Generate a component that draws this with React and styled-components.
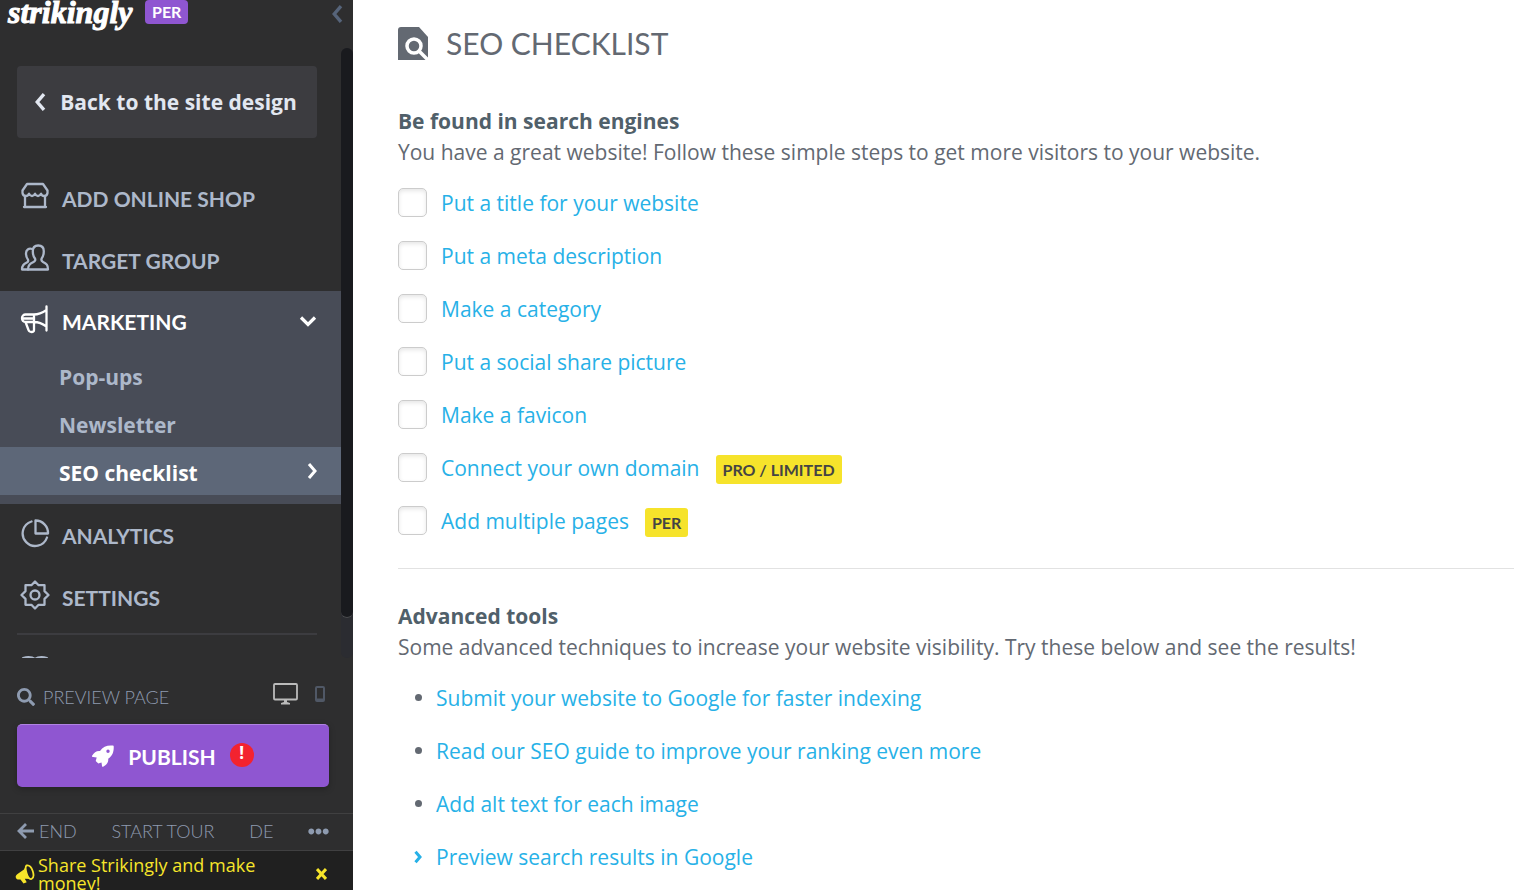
import React from 'react';
import styled, { createGlobalStyle } from 'styled-components';
import { FaSearch, FaEllipsisH } from 'react-icons/fa';

const GlobalStyle = createGlobalStyle`
  * {
    box-sizing: border-box;
  }

  body {
    margin: 0;
    background: #fff;
    font-family: "Open Sans", sans-serif;
    color: #636972;
  }

  button {
    border: 0;
    background: none;
    padding: 0;
    font: inherit;
    color: inherit;
    cursor: pointer;
  }

  a {
    text-decoration: none;
  }

  svg {
    flex: none;
  }

  ul, h1, h2, p {
    margin: 0;
    padding: 0;
  }
`

const Page = styled.div`
  display: flex;
  height: 100vh;
  overflow: hidden;
`

const Sidebar = styled.aside`
  display: flex;
  flex-direction: column;
  flex: none;
  width: 353px;
  background: #2e2e2f;
  color: #adb8ca;
`

const TopBar = styled.header`
  display: flex;
  align-items: flex-start;
  flex: none;
  height: 48px;
  padding: 0 10px 0 8px;
`

const Logo = styled.a`
  width: 126px;
  margin-right: 11px;
  font-family: "Liberation Serif", serif;
  font-size: 32px;
  font-weight: 700;
  font-style: italic;
  line-height: 24px;
  color: #fff;
  -webkit-text-stroke: 1px #fff;
`

const PlanBadge = styled.span`
  padding: 0 7px;
  border-radius: 4px;
  background: #8f56d1;
  font-family: Lato, sans-serif;
  font-size: 16px;
  font-weight: 700;
  line-height: 24px;
  color: #fff;
`

const Collapse = styled.button`
  display: flex;
  margin: 5px 0 0 auto;
  color: #56647a;
`

const MenuArea = styled.div`
  display: flex;
  flex: 1;
  min-height: 0;
`

const Menu = styled.nav`
  flex: 1;
  padding-top: 18px;
  overflow: hidden;
`

const Track = styled.div`
  width: 12px;
  border-radius: 6px;
  background: #2b2c31;
`

const Thumb = styled.div`
  height: 93.4%;
  border-radius: 6px;
  border-bottom: 1px solid #4c4d50;
  background: #191a1e;
`

const BackButton = styled.button`
  display: flex;
  align-items: center;
  gap: 14px;
  width: calc(100% - 41px);
  height: 72px;
  margin: 0 24px 29px 17px;
  padding: 0 18px;
  border-radius: 4px;
  background: #3c3c40;
  font-size: 21px;
  font-weight: 700;
  color: #e2e7f0;
  white-space: nowrap;
`

const NavRow = styled.button`
  display: flex;
  align-items: center;
  width: 100%;
  height: ${({ $open }) => ($open ? 60 : 62)}px;
  padding: 0 24px 0 20px;
  font-family: Lato, sans-serif;
  font-size: 21px;
  font-weight: 700;
  color: ${({ $open }) => ($open ? '#fff' : '#adb8ca')};
`

const NavIcon = styled.span`
  display: flex;
  margin: 0 12px 4px 0;
`

const NavText = styled.span`
  flex: 1;
  text-align: left;
`

const NavGroup = styled.div`
  padding-bottom: 9px;
  background: #484c57;
`

const SubItem = styled.a`
  display: flex;
  align-items: center;
  justify-content: space-between;
  height: 48px;
  padding: 4px 24px 0 59px;
  background: ${({ $active }) => ($active ? '#5d6778' : 'transparent')};
  font-size: 21px;
  font-weight: 700;
  color: ${({ $active }) => ($active ? '#fff' : '#adb8ca')};

  svg {
    margin-bottom: 4px;
  }
`

const MenuRule = styled.hr`
  margin: 5px 24px 5px 17px;
  border: 0;
  border-top: 2px solid #3c3c40;
`

const PreviewRow = styled.div`
  display: flex;
  align-items: center;
  flex: none;
  height: 66px;
  padding: 12px 28px 0 17px;
  font-family: Lato, sans-serif;
  font-size: 18px;
  font-weight: 300;
  color: #8e9bb0;
`

const PreviewButton = styled.button`
  display: flex;
  align-items: center;
  gap: 8px;
  margin-right: auto;
`

const DeviceButton = styled.button`
  display: flex;
  margin-left: 17px;
  padding-bottom: 6px;
`

const PublishButton = styled.button`
  display: flex;
  align-items: center;
  justify-content: center;
  flex: none;
  height: 63px;
  margin: 0 24px 26px 17px;
  border-top: 1px solid #b083e2;
  border-radius: 5px;
  background: #8f56d1;
  box-shadow: 0 2px 6px rgba(0, 0, 0, .25);
  font-family: Lato, sans-serif;
  font-size: 21px;
  font-weight: 700;
  color: #fff;
`

const PublishLabel = styled.span`
  margin: 0 14px;
`

const Alert = styled.span`
  width: 24px;
  height: 24px;
  margin-bottom: 2px;
  border-radius: 50%;
  background: #f3232f;
  font-family: "Noto Sans", sans-serif;
  font-size: 17px;
  line-height: 20px;
  text-align: center;
`

const BottomBar = styled.div`
  display: flex;
  align-items: center;
  justify-content: space-between;
  flex: none;
  height: 38px;
  padding: 0 24px 2px 17px;
  border-top: 1px solid #404041;
  border-bottom: 1px solid #404041;
  font-family: Lato, sans-serif;
  font-size: 18px;
  font-weight: 300;
  color: #8e9bb0;
`

const BarButton = styled.button`
  display: flex;
  align-items: center;
  gap: 5px;
`

const ShareBar = styled.div`
  display: flex;
  align-items: center;
  flex: none;
  height: 39px;
  padding: 7px 26px 0 15px;
  background: #202020;
  color: #f7e52a;
`

const ShareLink = styled.a`
  flex: 1;
  margin: 0 50px 0 3px;
  font-size: 18px;
  line-height: 18px;
  color: inherit;
`

const Main = styled.main`
  flex: 1;
  min-width: 0;
  padding: 22px 0 0 45px;
  overflow: hidden;
`

const Heading = styled.h1`
  display: flex;
  align-items: center;
  gap: 18px;
  height: 42px;
  margin-bottom: 42px;
  font-family: Lato, sans-serif;
  font-size: 30px;
  font-weight: 400;
  line-height: 40px;
`

const SectionTitle = styled.h2`
  font-size: 21px;
  font-weight: 700;
  line-height: 31px;
  color: #50606a;
`

const Lead = styled.p`
  font-size: 21px;
  line-height: 31px;
`

const List = styled.ul`
  padding-top: 8px;
  list-style: none;
`

const Item = styled.li`
  display: flex;
  align-items: center;
  height: 53px;
`

const Check = styled.input`
  appearance: none;
  width: 29px;
  height: 29px;
  margin: 0 14px 0 0;
  border: 1px solid #ccc;
  border-radius: 5px;
  background: #fff;
  box-shadow: inset 0 2px 4px rgba(0, 0, 0, .1);
`

const TextLink = styled.a`
  font-size: 21px;
  color: #27b1e7;
`

const Tag = styled.span`
  margin: 4px 0 0 16px;
  padding: 0 7px;
  border-radius: 3px;
  background: #f6e32b;
  font-family: Lato, sans-serif;
  font-size: 16px;
  font-weight: 700;
  line-height: 29px;
  color: #444;
`

const Rule = styled.hr`
  margin: 21px 0 32px;
  border: 0;
  border-top: 1px solid #e2e2e2;
`

const Marker = styled.span`
  display: flex;
  justify-content: center;
  width: 12px;
  margin: 0 12px 0 14px;
  color: #27b1e7;
`

const Dot = styled.span`
  width: 7px;
  height: 7px;
  border-radius: 50%;
  background: #636972;
`

const arrows = {
  left: 'M8 1L2 8l6 7',
  right: 'M2 1l6 7-6 7',
}

const Chevron = ({ to, height = 16, weight = 3 }) => (
  <svg width={height * 0.625} height={height} viewBox="0 0 10 16" fill="none" stroke="currentColor"
    strokeWidth={weight} overflow="visible" aria-hidden="true">
    <path d={arrows[to]} />
  </svg>
)

const ChevronDown = () => (
  <svg width="18" height="18" viewBox="0 0 18 18" fill="none" stroke="currentColor" strokeWidth="3.200" aria-hidden="true">
    <path d="M2 5.500l7 7 7-7" />
  </svg>
)

const Line = ({ children }) => (
  <svg width="30" height="30" viewBox="0 0 30 30" fill="none" stroke="currentColor"
    strokeWidth="2.300" strokeLinejoin="round" strokeLinecap="round" aria-hidden="true">
    {children}
  </svg>
)

const ShopIcon = () => (
  <Line>
    <path d="M7 3h16l4.500 6.500v2.500c-.3 2-1.700 3-3.300 3s-2.600-.8-3.200-2.300c-.8 1.500-1.800 2.300-3 2.300s-2.300-.8-3-2.300c-.7 1.500-1.800 2.300-3 2.300s-2.200-.8-3-2.300C8.400 14.200 7.400 15 5.800 15s-3-1-3.300-3V9.500z" />
    <path d="M5 15.500V26M25 15.500V26M4 26h22" />
  </Line>
)

const GroupIcon = () => (
  <Line>
    <path d="M18.200 2.500c-3.400 0-5.400 2.200-5.400 5.700 0 3 .7 5.300 2 7 1 1.600.4 2.800-1.300 3.700C10 20.700 8 22 8 26.500h20c0-4.500-1.500-5.800-5-7.600-1.700-.9-2-2.100-1.200-3.700 1.200-1.700 2-4 2-7 0-3.500-2.200-5.700-5.600-5.700z" />
    <path d="M12.200 6C8.600 5 6 6.800 6 10.200c0 2.700.6 4.600 1.800 6.200.8 1.300.4 2.400-1 3.200C3.500 21.500 2 22.500 2 26.500h6" />
  </Line>
)

const MegaphoneIcon = () => (
  <Line>
    <path d="M26.500 2.500v24M26.500 6C22 9 19 10.500 14 10.500H5.500A3.500 3.500 0 0 0 2 14c0 2.500 1.500 4 4 4h8c5 0 8 1.200 12.500 4.500M14 10.500V26c0 1-1 2-2.500 2S9 27.500 8.500 26L5.500 18M2.500 14.500H14" />
  </Line>
)

const PieIcon = () => (
  <Line>
    <path d="M11.500 3.500A12.500 12.500 0 1 0 27 19.500" />
    <path d="M15.500 2.500a12.500 12.500 0 0 1 12.500 13H15.500z" />
  </Line>
)

const GearIcon = () => (
  <Line>
    <path d="M15 1.500l3.600 3.700h5.900v5.900l4 3.900-4 3.900v5.900h-5.900L15 28.500l-3.600-3.700H5.500v-5.900l-4-3.900 4-3.900V5.200h5.900z" />
    <circle cx="15" cy="15" r="4.500" />
  </Line>
)

const BookIcon = () => (
  <Line>
    <path d="M15 5c-3-2-8-2-12-1v20c4-1 9-1 12 1 3-2 8-2 12-1V4c-4-1-9-1-12 1zv20" />
  </Line>
)

const RocketIcon = () => (
  <svg width="22" height="22" viewBox="0 0 22 22" fill="currentColor" aria-hidden="true">
    <path fillRule="evenodd" d="M21 .6C15.500 0 11 1.500 8 6 4.500 5.600 2 7.500.2 10.500c-.4.900 0 1.500.9 1.600l3.600.5-1 3.300 2.600 2.600 3.200-1 .5 3.500c.1.900.8 1.100 1.500.6 3.400-2 5.100-4.500 4.700-7.900C20.500 11 22 6.500 21.700 1.300 21.600.8 21.400.6 21 .6zM16 4.500a1.700 1.700 0 1 1 0 3.400 1.700 1.700 0 0 1 0-3.400z" />
  </svg>
)

const BackArrow = () => (
  <svg width="17" height="16" viewBox="0 0 17 16" fill="none" stroke="currentColor" strokeWidth="2.800" aria-hidden="true">
    <path d="M9 1L2 8l7 7M2 8h15" />
  </svg>
)

const HornIcon = () => (
  <svg width="20" height="21" viewBox="0 0 20 21" aria-hidden="true">
    <path d="M10.500 2.500L9 5.500 2.500 10C.8 11.200.3 12.500 1 14c.6 1.300 1.800 1.700 3.500 1.500l1 .1 3 3.900 3.200-1.300-1.900-3.400 6.700.2z" fill="currentColor" />
    <path d="M11.500 1.500c2.500-.5 5 2 6.200 5.500s.8 7-1.200 8c-2 .5-4-2.500-5-6s-1.200-6.500 0-7.500z" fill="#202020" stroke="currentColor" strokeWidth="1.800" />
  </svg>
)

const CloseIcon = () => (
  <svg width="11" height="12" viewBox="0 0 11 12" fill="none" stroke="currentColor" strokeWidth="3" aria-hidden="true">
    <path d="M1 1l9 10M10 1L1 11" />
  </svg>
)

const DesktopIcon = () => (
  <svg width="25" height="22" viewBox="0 0 25 22" fill="none" stroke="#bbb" strokeWidth="1.800" aria-hidden="true">
    <rect x="1" y="1" width="23" height="15.500" rx="1" />
    <path d="M11 17h3v2l3 1v1.500H8V20l3-1z" fill="#bbb" stroke="none" />
  </svg>
)

const PhoneIcon = () => (
  <svg width="10" height="16" viewBox="0 0 10 16" fill="none" stroke="#505866" aria-hidden="true">
    <rect x="1" y="1" width="8" height="14" rx="1" strokeWidth="2" />
    <path d="M1 13.500h8" strokeWidth="2" />
  </svg>
)

const SeoIcon = () => (
  <svg width="30" height="33" viewBox="0 0 30 33" aria-hidden="true">
    <path d="M3 0h18l9 10v23H0V3a3 3 0 0 1 3-3z" fill="#636972" />
    <circle cx="16" cy="19" r="7" fill="none" stroke="#fff" strokeWidth="3.500" />
    <path d="M21 24l9 9" stroke="#fff" strokeWidth="3.500" />
  </svg>
)

const checks = [
  { label: 'Put a title for your website' },
  { label: 'Put a meta description' },
  { label: 'Make a category' },
  { label: 'Put a social share picture' },
  { label: 'Make a favicon' },
  { label: 'Connect your own domain', tag: 'PRO / LIMITED' },
  { label: 'Add multiple pages', tag: 'PER' },
]

const tools = [
  'Submit your website to Google for faster indexing',
  'Read our SEO guide to improve your ranking even more',
  'Add alt text for each image',
]

const CheckItem = ({ id, label, tag }) => (
  <Item>
    <Check type="checkbox" id={id} aria-labelledby={`${id}-label`} />
    <TextLink href="#" id={`${id}-label`}>{label}</TextLink>
    {tag && <Tag>{tag}</Tag>}
  </Item>
)

const NavItem = ({ icon, label, open }) => (
  <NavRow $open={open}>
    <NavIcon>{icon}</NavIcon>
    <NavText>{label}</NavText>
    {open && <ChevronDown />}
  </NavRow>
)

const App = () => {
  return (
    <>
      <GlobalStyle />
      <Page>
        <Sidebar>
          <TopBar>
            <Logo href="#">strikingly</Logo>
            <PlanBadge>PER</PlanBadge>
            <Collapse aria-label="Collapse"><Chevron to="left" height={18} weight={3} /></Collapse>
          </TopBar>

          <MenuArea>
            <Menu>
              <BackButton><Chevron to="left" height={18} />Back to the site design</BackButton>
              <NavItem icon={<ShopIcon />} label="ADD ONLINE SHOP" />
              <NavItem icon={<GroupIcon />} label="TARGET GROUP" />
              <NavGroup>
                <NavItem icon={<MegaphoneIcon />} label="MARKETING" open />
                <SubItem href="#">Pop-ups</SubItem>
                <SubItem href="#">Newsletter</SubItem>
                <SubItem href="#" $active>SEO checklist<Chevron to="right" /></SubItem>
              </NavGroup>
              <NavItem icon={<PieIcon />} label="ANALYTICS" />
              <NavItem icon={<GearIcon />} label="SETTINGS" />
              <MenuRule />
              <NavItem icon={<BookIcon />} />
            </Menu>
            <Track><Thumb /></Track>
          </MenuArea>

          <PreviewRow>
            <PreviewButton><FaSearch size={18} />PREVIEW PAGE</PreviewButton>
            <DeviceButton aria-label="Desktop"><DesktopIcon /></DeviceButton>
            <DeviceButton aria-label="Mobile"><PhoneIcon /></DeviceButton>
          </PreviewRow>
          <PublishButton>
            <RocketIcon />
            <PublishLabel>PUBLISH</PublishLabel>
            <Alert>!</Alert>
          </PublishButton>

          <BottomBar>
            <BarButton><BackArrow />END</BarButton>
            <BarButton>START TOUR</BarButton>
            <BarButton>DE</BarButton>
            <BarButton aria-label="More"><FaEllipsisH size={21} /></BarButton>
          </BottomBar>
          <ShareBar>
            <HornIcon />
            <ShareLink href="#">Share Strikingly and make money!</ShareLink>
            <button aria-label="Close"><CloseIcon /></button>
          </ShareBar>
        </Sidebar>

        <Main>
          <Heading><SeoIcon />SEO CHECKLIST</Heading>
          <SectionTitle>Be found in search engines</SectionTitle>
          <Lead>You have a great website! Follow these simple steps to get more visitors to your website.</Lead>
          <List>
            {checks.map((c, i) => <CheckItem key={c.label} id={`check-${i}`} {...c} />)}
          </List>
          <Rule />
          <SectionTitle>Advanced tools</SectionTitle>
          <Lead>Some advanced techniques to increase your website visibility. Try these below and see the results!</Lead>
          <List>
            {tools.map((t) => (
              <Item key={t}><Marker><Dot /></Marker><TextLink href="#">{t}</TextLink></Item>
            ))}
            <Item>
              <Marker><Chevron to="right" height={12} weight={4} /></Marker>
              <TextLink href="#">Preview search results in Google</TextLink>
            </Item>
          </List>
        </Main>
      </Page>
    </>
  )
}

export default App
